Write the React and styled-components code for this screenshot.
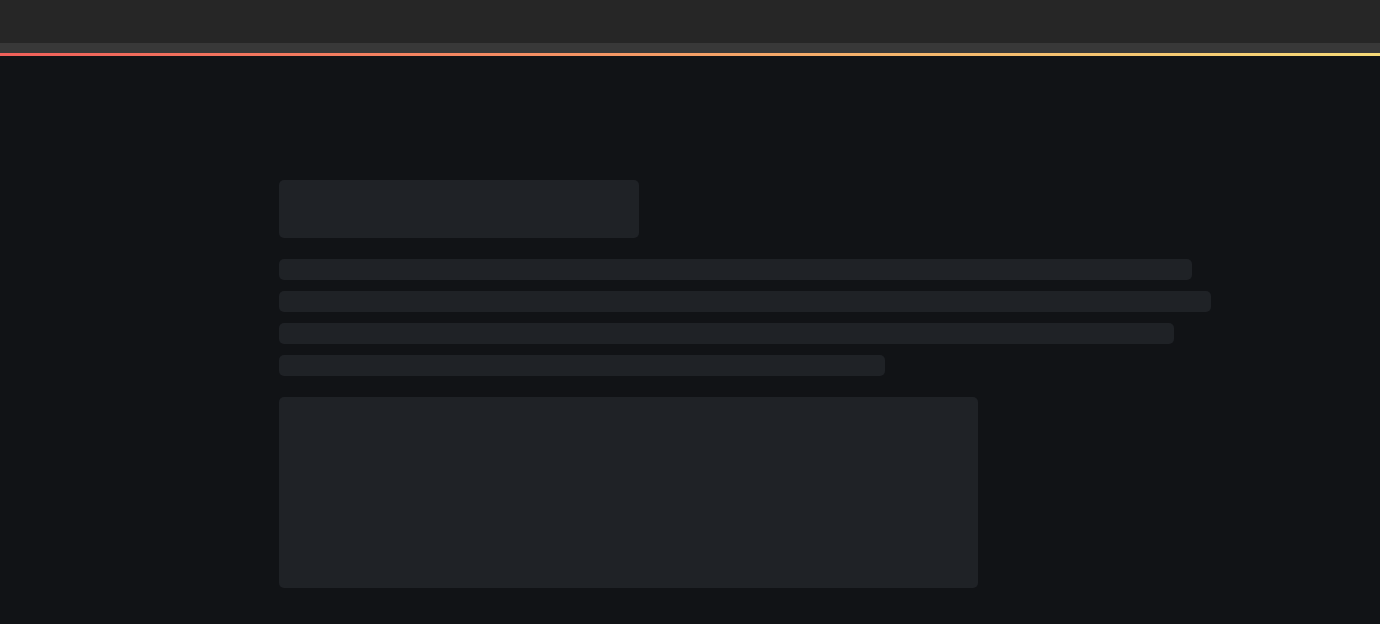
import React from "react";
import styled, { createGlobalStyle } from "styled-components";

const Global = createGlobalStyle`
  html, body { margin: 0; padding: 0; background: #111316; }
  body { font-family: "Inter", "Liberation Sans", sans-serif; }
`;

const Page = styled.div`
  min-height: 624px;
  background: #111316;
  display: flex;
  flex-direction: column;
`;

const TopBar = styled.header`
  height: 43px;
  background: #262626;
`;

const SubBar = styled.div`
  height: 10px;
  background: #383838;
`;

const Accent = styled.div`
  height: 3px;
  background: linear-gradient(90deg, #f0605a 0%, #f58a62 35%, #f5b56c 65%, #f6da78 100%);
`;

const Content = styled.main`
  width: 932px;
  padding-top: 124px;
  padding-left: 279px;
  display: flex;
  flex-direction: column;
`;

const Bone = styled.div`
  background: #1f2226;
  border-radius: ${(p) => p.$radius || 5}px;
  width: ${(p) => p.$w}px;
  height: ${(p) => p.$h}px;
`;

const Lines = styled.div`
  display: flex;
  flex-direction: column;
  gap: 11px;
  margin-top: 21px;
`;

const Block = styled(Bone)`
  margin-top: 21px;
`;

const lines = [913, 932, 895, 606];

export default function App() {
  return (
    <Page>
      <Global />
      <TopBar />
      <SubBar />
      <Accent />
      <Content>
        <Bone $w={360} $h={58} $radius={5} />
        <Lines>
          {lines.map((w, i) => (
            <Bone key={i} $w={w} $h={21} $radius={5} />
          ))}
        </Lines>
        <Block $w={699} $h={191} $radius={5} />
      </Content>
    </Page>
  );
}
